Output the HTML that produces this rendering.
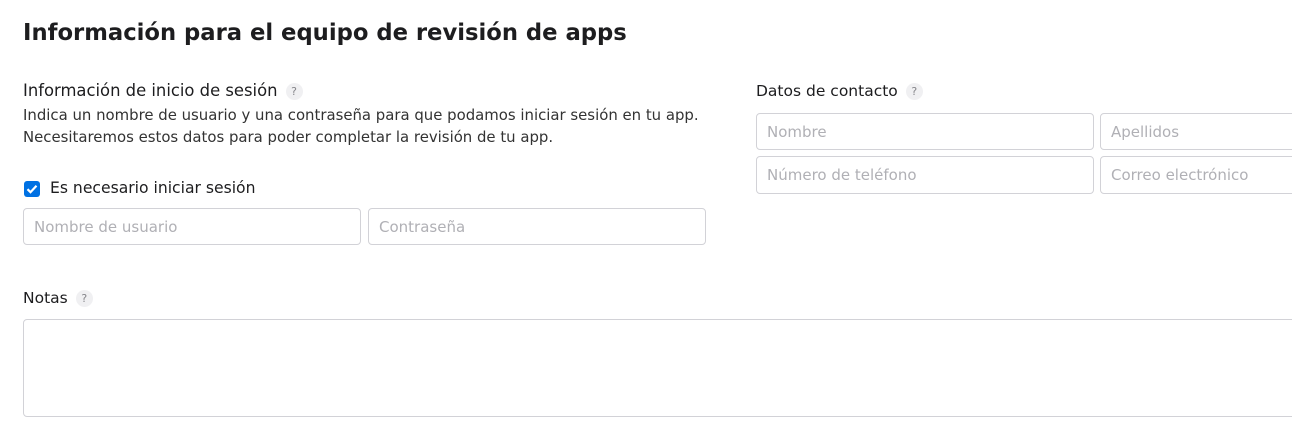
<!DOCTYPE html><html><head><style>
body{margin:0;width:1292px;height:441px;background:#fff;overflow:hidden;font-family:"DejaVu Sans",sans-serif;color:#1d1d1f;position:relative}
.a{position:absolute;white-space:nowrap}
.in{position:absolute;border:1px solid #d2d2d7;border-radius:4px;box-sizing:border-box;color:#b0b0b5;font-size:15px;padding-left:10px;display:flex;align-items:center}
.q{display:inline-block;width:17px;height:17px;border-radius:50%;background:#f0f0f2;color:#86868b;font-size:11px;text-align:center;line-height:17px;margin-left:8px;vertical-align:1px}
</style></head><body>
<div class="a" style="left:23px;top:20px;font-size:22.7px;font-weight:bold;">Información para el equipo de revisión de apps</div>
<div class="a" style="left:23px;top:81px;font-size:16.4px;">Información de inicio de sesión<span class="q">?</span></div>
<div class="a" style="left:23px;top:104px;font-size:14.9px;line-height:22px;color:#333">Indica un nombre de usuario y una contraseña para que podamos iniciar sesión en tu app.<br>Necesitaremos estos datos para poder completar la revisión de tu app.</div>
<div class="a" style="left:24px;top:181px;width:16px;height:16px;background:#0071e3;border-radius:3px"><svg width="16" height="16" viewBox="0 0 16 16"><path d="M3.5 8.2l3 3 6-6.5" stroke="#fff" stroke-width="2.2" fill="none"/></svg></div>
<div class="a" style="left:50px;top:179px;font-size:15.6px;">Es necesario iniciar sesión</div>
<div class="in" style="left:23px;top:208px;width:338px;height:37px">Nombre de usuario</div>
<div class="in" style="left:368px;top:208px;width:338px;height:37px">Contraseña</div>
<div class="a" style="left:756px;top:82px;font-size:15.5px;">Datos de contacto<span class="q">?</span></div>
<div class="in" style="left:756px;top:113px;width:338px;height:37px">Nombre</div>
<div class="in" style="left:1100px;top:113px;width:260px;height:37px">Apellidos</div>
<div class="in" style="left:756px;top:156px;width:338px;height:38px">Número de teléfono</div>
<div class="in" style="left:1100px;top:156px;width:260px;height:38px">Correo electrónico</div>
<div class="a" style="left:23px;top:289px;font-size:15.5px;">Notas<span class="q">?</span></div>
<div class="in" style="left:23px;top:319px;width:1340px;height:98px"></div>
</body></html>
